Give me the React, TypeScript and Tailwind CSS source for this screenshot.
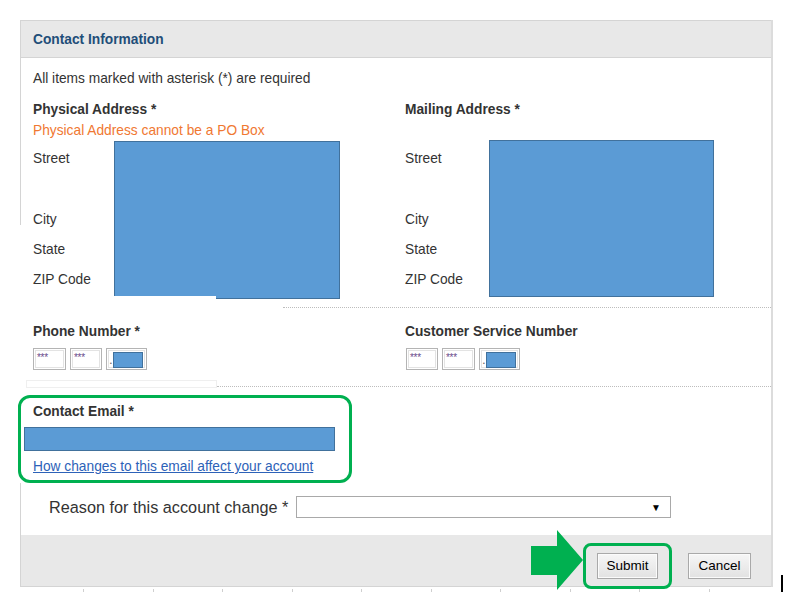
import React from "react";

const font = { fontFamily: '"Liberation Sans", Arial, sans-serif' };

function SmallInput({ w, masked }: { w: string; masked?: boolean }) {
  return (
    <div className={`${w} h-[22px] border border-[#b4b4b4] bg-white p-px`}>
      <div className="w-full h-full border border-[#e3e3e3] relative flex items-start">
        {masked ? (
          <>
            <span className="text-[5px] leading-[5px] text-[#555] ml-px mt-[10px]">•</span>
            <div className="ml-px mt-[1px] w-[30px] h-[16px] bg-[#5b9bd5] border border-[#41719c]" />
          </>
        ) : (
          <span className="text-[10px] leading-[10px] text-[#6a4c8c] ml-[1px] mt-[2px] tracking-[-0.3px]">***</span>
        )}
      </div>
    </div>
  );
}

function Btn({ label, w }: { label: string; w: string }) {
  return (
    <div
      className={`${w} h-[26px] border border-[#a9a9a9] bg-gradient-to-b from-[#f6f6f6] to-[#e2e2e2] flex items-center justify-center text-[13.5px] text-black shadow-[inset_0_0_0_1px_#fbfbfb]`}
    >
      {label}
    </div>
  );
}

export default function App() {
  return (
    <div className="w-[795px] h-[598px] bg-white relative overflow-hidden text-[#333]" style={font}>
      <div className="pt-[20px] pl-[20px]">
        <div className="w-[753px] border-r-2 border-[#dcdcdc] flex flex-col">
          {/* header */}
          <div className="h-[38px] bg-[#e8e8e8] border-t border-l border-b border-[#d4d4d4] flex items-center pl-[12px] pt-[3px]">
            <span className="text-[13.75px] font-bold text-[#1f4e79]">Contact Information</span>
          </div>
          {/* body */}
          <div className="flex">
            <div className="w-px flex flex-col">
              <div className="h-[167px] bg-[#d4d4d4]" />
              <div className="flex-1" />
              <div className="h-[104px] bg-[#d4d4d4]" />
            </div>
            <div className="flex-1 flex flex-col">
              <div className="pt-[12px] pl-[12px] h-[28px] text-[13.75px] leading-[17px]">
                All items marked with asterisk (*) are required
              </div>
              {/* addresses */}
              <div className="mt-[15px] grid grid-cols-[372px_1fr]">
                <div className="pl-[12px] flex flex-col">
                  <div className="h-[16px] leading-[17px] text-[13.75px] font-bold">Physical Address *</div>
                  <div className="mt-[5px] h-[16px] leading-[17px] text-[13.75px] text-[#f07832]">
                    Physical Address cannot be a PO Box
                  </div>
                  <div className="mt-[3px] flex">
                    <div className="w-[81px] flex flex-col text-[13.75px] leading-[16px]">
                      <div className="mt-[10px]">Street</div>
                      <div className="mt-[45px]">City</div>
                      <div className="mt-[14px]">State</div>
                      <div className="mt-[14px]">ZIP Code</div>
                    </div>
                    <div className="w-[226px] flex flex-col">
                      <div className="h-[155px] bg-[#5b9bd5] border-t border-l border-r border-[#41719c]" />
                      <div className="flex h-[3px]">
                        <div className="w-[102px]" />
                        <div className="flex-1 bg-[#5b9bd5] border-r border-b border-[#41719c]" />
                      </div>
                    </div>
                  </div>
                </div>
                <div className="pl-[12px] flex flex-col">
                  <div className="h-[16px] leading-[17px] text-[13.75px] font-bold">Mailing Address *</div>
                  <div className="mt-[5px] h-[16px]" />
                  <div className="mt-[2px] flex">
                    <div className="w-[84px] flex flex-col text-[13.75px] leading-[16px]">
                      <div className="mt-[11px]">Street</div>
                      <div className="mt-[45px]">City</div>
                      <div className="mt-[14px]">State</div>
                      <div className="mt-[14px]">ZIP Code</div>
                    </div>
                    <div className="w-[225px] h-[157px] bg-[#5b9bd5] border border-[#41719c]" />
                  </div>
                </div>
              </div>
              <div className="mt-[8px] ml-[262px] border-t border-dotted border-[#bdbdbd]" />
              {/* phones */}
              <div className="mt-[15px] grid grid-cols-[372px_1fr]">
                <div className="pl-[12px]">
                  <div className="h-[16px] leading-[17px] text-[13.75px] font-bold">Phone Number *</div>
                  <div className="mt-[9px] flex gap-[4px]">
                    <SmallInput w="w-[33px]" />
                    <SmallInput w="w-[32px]" />
                    <SmallInput w="w-[41px]" masked />
                  </div>
                </div>
                <div className="pl-[12px]">
                  <div className="h-[16px] leading-[17px] text-[13.75px] font-bold">Customer Service Number</div>
                  <div className="mt-[9px] ml-px flex gap-[4px]">
                    <SmallInput w="w-[32px]" />
                    <SmallInput w="w-[33px]" />
                    <SmallInput w="w-[41px]" masked />
                  </div>
                </div>
              </div>
              <div className="mt-[10px] h-[8px] flex">
                <div className="ml-[5px] w-[191px] h-full border border-[#efefef]" />
                <div className="flex-1 mt-[6px] border-t border-dotted border-[#bdbdbd]" />
              </div>
              {/* email */}
              <div className="mt-[7px] ml-[-3px] w-[334px] border-[3px] border-[#00b050] rounded-[12px] pt-[5px] pb-[6px] flex flex-col">
                <div className="ml-[12px] h-[16px] leading-[17px] text-[13.75px] font-bold">Contact Email *</div>
                <div className="mt-[8px] ml-[3px] w-[311px] h-[24px] bg-[#5b9bd5] border border-[#41719c]" />
                <div className="mt-[7px] ml-[12px] h-[16px] leading-[17px] text-[13.75px] text-[#2d62b8] underline whitespace-nowrap">
                  How changes to this email affect your account
                </div>
              </div>
              {/* reason */}
              <div className="mt-[13px] h-[22px] flex items-center pl-[28px]">
                <span className="w-[247px] text-[16.25px] leading-[20px] text-[#333] whitespace-nowrap">
                  Reason for this account change *
                </span>
                <div className="w-[375px] h-[22px] border border-[#a9a9a9] bg-white flex items-center justify-end pr-[9px]">
                  <span className="text-[10px] text-black">▼</span>
                </div>
              </div>
              {/* footer */}
              <div className="mt-[17px] h-[52px] bg-[#e8e8e8] border-b border-[#d4d4d4] relative flex items-start justify-end pr-[20px]">
                <svg className="absolute left-[510px] top-[-5px]" width="52" height="60" viewBox="0 0 52 60">
                  <polygon points="0,16 26,16 26,0 52,30 26,60 26,45 0,45" fill="#00b050" />
                </svg>
                <div className="mt-[8px] border-[3px] border-[#00b050] rounded-[8px] px-[11px] py-[7px] bg-[#e8e8e8]">
                  <Btn label="Submit" w="w-[61px]" />
                </div>
                <div className="mt-[18px] ml-[16px]">
                  <Btn label="Cancel" w="w-[63px]" />
                </div>
              </div>
            </div>
          </div>
        </div>
        <div className="mt-[2px] ml-[63px] flex gap-[68.5px]">
          {Array.from({ length: 10 }).map((_, i) => (
            <div key={i} className="w-px h-[3px] bg-[#cfcfcf]" />
          ))}
        </div>
      </div>
      <div className="absolute left-[781px] top-[575px] w-[2px] h-[17px] bg-black" />
    </div>
  );
}
